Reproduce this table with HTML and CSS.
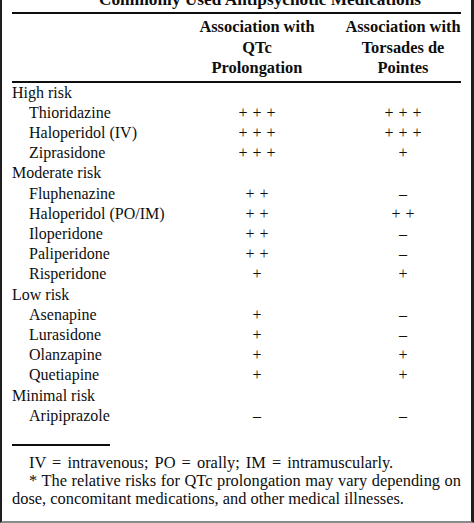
FILE: index.html
```html
<!DOCTYPE html>
<html>
<head>
<meta charset="utf-8">
<link rel="stylesheet" href="styles.css">
</head>
<body>
<div class="frame">
  <div class="caption">Commonly Used Antipsychotic Medications</div>
  <div class="table">
    <div class="head">
      <div class="hcell"></div>
      <div class="hcell">Association with<br>QTc<br>Prolongation</div>
      <div class="hcell c2">Association with<br>Torsades de<br>Pointes</div>
    </div>
    <div class="body">
      <div class="group">High risk</div>
      <div class="drug">Thioridazine</div><div class="v">+++</div><div class="v c2">+++</div>
      <div class="drug">Haloperidol (IV)</div><div class="v">+++</div><div class="v c2">+++</div>
      <div class="drug">Ziprasidone</div><div class="v">+++</div><div class="v c2">+</div>
      <div class="group">Moderate risk</div>
      <div class="drug">Fluphenazine</div><div class="v">++</div><div class="v c2">–</div>
      <div class="drug">Haloperidol (PO/IM)</div><div class="v">++</div><div class="v c2">++</div>
      <div class="drug">Iloperidone</div><div class="v">++</div><div class="v c2">–</div>
      <div class="drug">Paliperidone</div><div class="v">++</div><div class="v c2">–</div>
      <div class="drug">Risperidone</div><div class="v">+</div><div class="v c2">+</div>
      <div class="group">Low risk</div>
      <div class="drug">Asenapine</div><div class="v">+</div><div class="v c2">–</div>
      <div class="drug">Lurasidone</div><div class="v">+</div><div class="v c2">–</div>
      <div class="drug">Olanzapine</div><div class="v">+</div><div class="v c2">+</div>
      <div class="drug">Quetiapine</div><div class="v">+</div><div class="v c2">+</div>
      <div class="group">Minimal risk</div>
      <div class="drug">Aripiprazole</div><div class="v">–</div><div class="v c2">–</div>
    </div>
    <div class="foot">
      <div class="rule"></div>
      <p class="note first">IV = intravenous; PO = orally; IM = intramuscularly.</p>
      <p class="note second">* The relative risks for QTc prolongation may vary depending on dose, concomitant medications, and other medical illnesses.</p>
    </div>
  </div>
</div>
</body>
</html>
```
FILE: styles.css
```css
html, body {
  margin: 0;
  padding: 0;
  background: #fff;
}
body {
  width: 474px;
  height: 523px;
  overflow: hidden;
  font-family: "Liberation Serif", "Times New Roman", serif;
  color: #0e0e0e;
}
.frame {
  box-sizing: border-box;
  width: 474px;
  height: 523px;
  border-left: 2px solid #1e1e1e;
  border-right: 3px solid #1e1e1e;
  border-bottom: 2px solid #8a8a8a;
  padding: 0 10px 0 10px;
  overflow: hidden;
}
.caption {
  font-weight: bold;
  font-size: 17.3px;
  line-height: 20px;
  margin-top: -10px;
  margin-bottom: 2px;
  padding-left: 47px;
  text-align: center;
  white-space: nowrap;
}
.table {
  border-top: 2px solid #0e0e0e;
}
.head {
  display: grid;
  grid-template-columns: 187px 116px 1fr;
  border-bottom: 2px solid #0e0e0e;
  padding: 3px 0 2px;
}
.hcell {
  font-weight: bold;
  font-size: 16.4px;
  line-height: 20.5px;
  text-align: center;
}
.c2 {
  padding-left: 30px;
}
.body {
  display: grid;
  grid-template-columns: 187px 116px 1fr;
  font-size: 16px;
  line-height: 20.2px;
}
.group {
  grid-column: 1 / -1;
}
.drug {
  padding-left: 17px;
  white-space: nowrap;
}
.v {
  text-align: center;
  letter-spacing: 5px;
  text-indent: 5px;
}
.foot {
  padding-top: 18px;
}
.rule {
  width: 98px;
  height: 2px;
  background: #0e0e0e;
}
.note {
  margin: 0;
  font-size: 16.4px;
  line-height: 18px;
  text-indent: 17px;
  text-align: justify;
}
.first {
  margin-top: 8px;
  word-spacing: 2px;
}
.second {
  word-spacing: 0;
}
```
